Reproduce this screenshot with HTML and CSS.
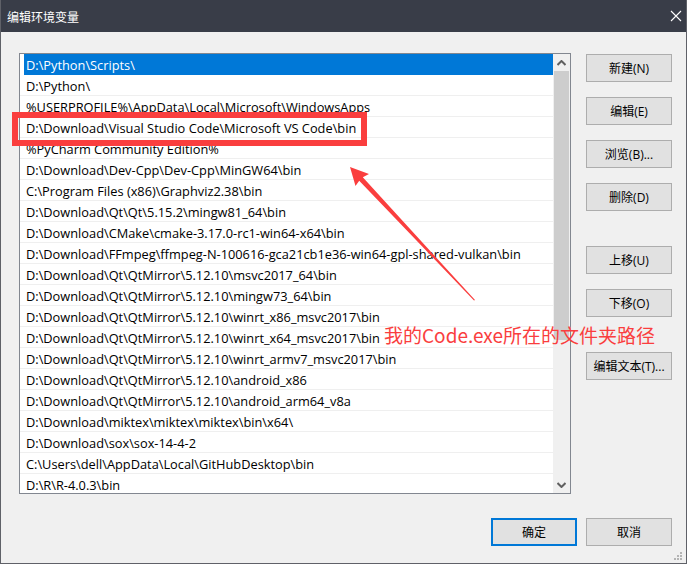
FILE: index.html
```html
<!DOCTYPE html>
<html lang="zh-CN">
<head>
<meta charset="UTF-8">
<meta name="viewport" content="width=device-width, initial-scale=1.0">
<title>编辑环境变量</title>
<link rel="stylesheet" href="styles.css">
</head>
<body>
    <div class="window">
        <div class="titlebar">
            <span class="title">编辑环境变量</span>
            <svg class="close" width="12" height="12" viewBox="0 0 12 12">
                <path d="M1 1 L11 11 M11 1 L1 11" stroke="#ffffff" stroke-width="1.1" fill="none"/>
            </svg>
        </div>

        <div class="content">
            <div class="main">
                <div class="listbox">
                    <ul class="rows">
                        <li class="selected">D:\Python\Scripts\</li>
                        <li>D:\Python\</li>
                        <li>%USERPROFILE%\AppData\Local\Microsoft\WindowsApps</li>
                        <li>D:\Download\Visual Studio Code\Microsoft VS Code\bin</li>
                        <li>%PyCharm Community Edition%</li>
                        <li>D:\Download\Dev-Cpp\Dev-Cpp\MinGW64\bin</li>
                        <li>C:\Program Files (x86)\Graphviz2.38\bin</li>
                        <li>D:\Download\Qt\Qt\5.15.2\mingw81_64\bin</li>
                        <li>D:\Download\CMake\cmake-3.17.0-rc1-win64-x64\bin</li>
                        <li>D:\Download\FFmpeg\ffmpeg-N-100616-gca21cb1e36-win64-gpl-shared-vulkan\bin</li>
                        <li>D:\Download\Qt\QtMirror\5.12.10\msvc2017_64\bin</li>
                        <li>D:\Download\Qt\QtMirror\5.12.10\mingw73_64\bin</li>
                        <li>D:\Download\Qt\QtMirror\5.12.10\winrt_x86_msvc2017\bin</li>
                        <li>D:\Download\Qt\QtMirror\5.12.10\winrt_x64_msvc2017\bin</li>
                        <li>D:\Download\Qt\QtMirror\5.12.10\winrt_armv7_msvc2017\bin</li>
                        <li>D:\Download\Qt\QtMirror\5.12.10\android_x86</li>
                        <li>D:\Download\Qt\QtMirror\5.12.10\android_arm64_v8a</li>
                        <li>D:\Download\miktex\miktex\miktex\bin\x64\</li>
                        <li>D:\Download\sox\sox-14-4-2</li>
                        <li>C:\Users\dell\AppData\Local\GitHubDesktop\bin</li>
                        <li>D:\R\R-4.0.3\bin</li>
                    </ul>
                    <div class="scrollbar">
                        <div class="sb-btn">
                            <svg width="9" height="6" viewBox="0 0 9 6"><path d="M0.5 5 L4.5 1 L8.5 5" stroke="#606060" stroke-width="2" fill="none"/></svg>
                        </div>
                        <div class="sb-thumb"></div>
                        <div class="sb-track"></div>
                        <div class="sb-btn">
                            <svg width="9" height="6" viewBox="0 0 9 6"><path d="M0.5 1 L4.5 5 L8.5 1" stroke="#606060" stroke-width="2" fill="none"/></svg>
                        </div>
                    </div>
                </div>

                <div class="side">
                    <button class="btn">新建(N)</button>
                    <button class="btn">编辑(E)</button>
                    <button class="btn">浏览(B)...</button>
                    <button class="btn">删除(D)</button>
                    <button class="btn btn-group">上移(U)</button>
                    <button class="btn">下移(O)</button>
                    <button class="btn btn-group">编辑文本(T)...</button>
                </div>
            </div>

            <div class="footer">
                <button class="btn btn-default">确定</button>
                <button class="btn">取消</button>
            </div>
        </div>

        <svg class="grip" width="9" height="9" viewBox="0 0 9 9">
            <rect x="6" y="0" width="2" height="2" fill="#b4b4b4"/>
            <rect x="3" y="3" width="2" height="2" fill="#b4b4b4"/>
            <rect x="6" y="3" width="2" height="2" fill="#b4b4b4"/>
            <rect x="0" y="6" width="2" height="2" fill="#b4b4b4"/>
            <rect x="3" y="6" width="2" height="2" fill="#b4b4b4"/>
            <rect x="6" y="6" width="2" height="2" fill="#b4b4b4"/>
        </svg>

        <!-- annotazioni rosse sopra lo screenshot -->
        <div class="mark-box"></div>
        <svg class="mark-arrow" width="687" height="564" viewBox="0 0 687 564">
            <polygon points="349,167 368,174 361.8,177.3 474,300 473,300.5 358.2,180.7 354.5,186" fill="#fa3e3e"/>
        </svg>
        <div class="mark-text">我的Code.exe所在的文件夹路径</div>
    </div>
</body>
</html>
```

FILE: styles.css
```css
* {
    box-sizing: border-box;
}

body {
    margin: 0;
    padding: 0;
    font-family: "Open Sans", "Noto Sans CJK SC", sans-serif;
    font-size: 12px;
    color: #000;
}

.window {
    position: relative;
    width: 687px;
    height: 564px;
    background-color: #f0f0f0;
    border: 1px solid #5f6168;
    border-top: none;
    display: flex;
    flex-direction: column;
    overflow: hidden;
}

.titlebar {
    height: 32px;
    margin: 0 -1px;
    background-color: #393d48;
    display: flex;
    align-items: center;
    justify-content: space-between;
    padding: 0 4px 0 7px;
    flex-shrink: 0;
}

.title {
    color: #fff;
    font-family: "Noto Sans CJK SC", sans-serif;
    font-size: 12px;
}

.close {
    margin-right: 1px;
}

.content {
    flex: 1;
    display: flex;
    flex-direction: column;
    padding: 21px 14px 0 18px;
}

.main {
    display: flex;
    gap: 15px;
}

.listbox {
    width: 552px;
    height: 441px;
    border: 1px solid #828790;
    background-color: #fff;
    display: flex;
    overflow: hidden;
}

.rows {
    list-style: none;
    margin: 0;
    padding: 0;
    flex: 1;
    overflow: hidden;
    font-size: 12.8px;
}

.rows li {
    height: 21px;
    line-height: 22px;
    padding-left: 6px;
    border-bottom: 1px solid #efefef;
    white-space: nowrap;
}

.rows li.selected {
    background-color: #0078d7;
    color: #fff;
    margin-left: 4px;
    padding-left: 2px;
    border-bottom-color: #0078d7;
}

.scrollbar {
    width: 17px;
    background-color: #f0f0f0;
    display: flex;
    flex-direction: column;
}

.sb-btn {
    height: 17px;
    display: flex;
    align-items: center;
    justify-content: center;
}

.sb-thumb {
    height: 269px;
    margin: 0 1px;
    background-color: #cdcdcd;
}

.sb-track {
    flex: 1;
}

.side {
    display: flex;
    flex-direction: column;
    gap: 15px;
    padding-top: 1px;
}

.btn {
    width: 86px;
    height: 28px;
    padding: 0;
    background-color: #e1e1e1;
    border: 1px solid #adadad;
    border-radius: 0;
    font-family: "Open Sans", "Noto Sans CJK SC", sans-serif;
    font-size: 12px;
    color: #000;
}

.btn-group {
    margin-top: 20px;
}

.btn-default {
    border: 2px solid #0078d7;
}

.footer {
    display: flex;
    justify-content: flex-end;
    gap: 9px;
    margin-top: 24px;
}

.grip {
    position: absolute;
    right: 3px;
    bottom: 2px;
}

.mark-box {
    position: absolute;
    left: 11px;
    top: 112px;
    width: 355px;
    height: 34px;
    border: 6px solid #fa3e3e;
}

.mark-arrow {
    position: absolute;
    left: 0;
    top: 0;
}

.mark-text {
    position: absolute;
    left: 383px;
    top: 322px;
    color: #fa3e3e;
    font-family: "Noto Sans CJK SC", sans-serif;
    font-size: 19px;
    line-height: 26px;
    white-space: nowrap;
}
```
